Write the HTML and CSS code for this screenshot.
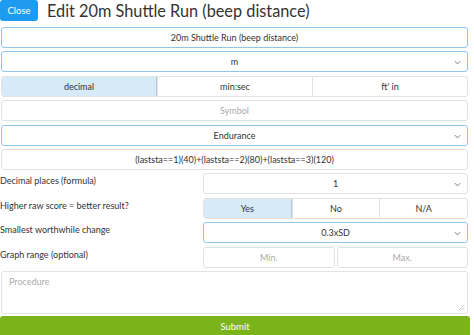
FILE: index.html
```html
<!DOCTYPE html>
<html>
<head>
<meta charset="utf-8">
<link rel="stylesheet" href="styles.css">
</head>
<body>
<div class="page">
  <div class="header">
    <button class="close">Close</button>
    <h1 class="title">Edit 20m Shuttle Run (beep distance)</h1>
  </div>
  <div class="form">
    <div class="field blue">20m Shuttle Run (beep distance)</div>
    <div class="field blue select"><span>m</span><svg class="chev" viewBox="0 0 8 5"><path d="M1 1l3 3 3-3" fill="none" stroke="#666" stroke-width="1"/></svg></div>
    <div class="group three">
      <div class="seg active">decimal</div>
      <div class="seg">min:sec</div>
      <div class="seg">ft' in</div>
    </div>
    <div class="field grey placeholder">Symbol</div>
    <div class="field blue select"><span>Endurance</span><svg class="chev" viewBox="0 0 8 5"><path d="M1 1l3 3 3-3" fill="none" stroke="#666" stroke-width="1"/></svg></div>
    <div class="field grey">(laststa==1)(40)+(laststa==2)(80)+(laststa==3)(120)</div>
    <div class="row">
      <div class="label">Decimal places (formula)</div>
      <div class="field grey select"><span>1</span><svg class="chev" viewBox="0 0 8 5"><path d="M1 1l3 3 3-3" fill="none" stroke="#666" stroke-width="1"/></svg></div>
    </div>
    <div class="row">
      <div class="label">Higher raw score = better result?</div>
      <div class="group three">
        <div class="seg active">Yes</div>
        <div class="seg">No</div>
        <div class="seg">N/A</div>
      </div>
    </div>
    <div class="row">
      <div class="label">Smallest worthwhile change</div>
      <div class="field blue select"><span>0.3xSD</span><svg class="chev" viewBox="0 0 8 5"><path d="M1 1l3 3 3-3" fill="none" stroke="#666" stroke-width="1"/></svg></div>
    </div>
    <div class="row">
      <div class="label">Graph range (optional)</div>
      <div class="pair">
        <div class="field grey placeholder">Min.</div>
        <div class="field grey placeholder">Max.</div>
      </div>
    </div>
    <div class="textarea">Procedure<svg class="grip" viewBox="0 0 8 8"><path d="M7 1L1 7M7 4L4 7M7 6.5L6.5 7" stroke="#aaa" stroke-width="0.8"/></svg></div>
  </div>
  <button class="submit">Submit</button>
</div>
</body>
</html>
```
FILE: styles.css
```css
* { box-sizing: border-box; }
html, body { margin: 0; padding: 0; background: #fff; }
body {
  font-family: Lato, "Open Sans", sans-serif;
  color: #333;
  width: 474px;
  height: 335px;
  overflow: hidden;
}
.page { width: 470px; }
.header {
  display: flex;
  align-items: center;
  height: 21px;
  gap: 9px;
}
.close {
  background: #1e9bf0;
  color: #fff;
  border: none;
  border-radius: 3px;
  font-family: inherit;
  font-size: 9.5px;
  width: 38px;
  height: 21px;
  padding: 0;
}
.title {
  margin: 0;
  font-size: 16.3px;
  font-weight: 400;
  color: #333;
}
.form {
  margin: 6px 0 0 1px;
  width: 467px;
  display: flex;
  flex-direction: column;
  gap: 3.4px;
}
.field {
  height: 21px;
  border: 1px solid #e2e2e2;
  border-radius: 3px;
  display: flex;
  align-items: center;
  justify-content: center;
  font-size: 9px;
  color: #333;
  position: relative;
  background: #fff;
}
.field.blue { border-color: #8fc6ee; }
.field.placeholder { color: #aaa; }
.chev {
  position: absolute;
  right: 6px;
  top: 8px;
  width: 7px;
  height: 5px;
}
.group {
  display: flex;
  height: 21px;
  border: 1px solid #e2e2e2;
  border-radius: 3px;
  overflow: hidden;
}
.seg {
  flex: 1;
  display: flex;
  align-items: center;
  justify-content: center;
  font-size: 9px;
  color: #333;
  border-left: 1px solid #e2e2e2;
}
.seg:first-child { border-left: none; }
.seg.active {
  background: #d6eaf8;
  border-right: 1px solid #b9c9d6;
}
.row {
  display: grid;
  grid-template-columns: 202px 1fr;
  align-items: center;
}
.row .label {
  font-size: 9px;
  color: #333;
  align-self: start;
  margin-top: 2px;
  margin-left: -1px;
}
.pair {
  display: flex;
  gap: 2px;
}
.pair .field { flex: 1; }
.textarea {
  height: 43px;
  border: 1px solid #e2e2e2;
  border-radius: 3px;
  font-size: 9px;
  color: #aaa;
  padding: 4px 7px;
  position: relative;
}
.grip {
  position: absolute;
  right: 2px;
  bottom: 2px;
  width: 7px;
  height: 7px;
}
.submit {
  display: block;
  margin-top: 2px;
  width: 470px;
  height: 22px;
  background: #7bb31a;
  border: none;
  border-radius: 3px;
  color: #fff;
  font-family: inherit;
  font-size: 9.5px;
  padding: 0;
}
```
